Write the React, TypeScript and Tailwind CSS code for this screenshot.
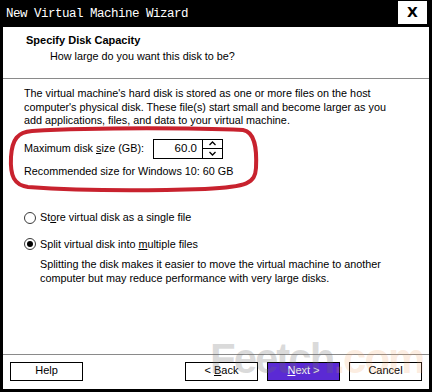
import React from 'react'

const ui = { fontFamily: '"Liberation Sans", Arial, sans-serif' }

function Radio({ checked }: { checked?: boolean }) {
  return (
    <span className="w-[12px] h-[12px] rounded-full border border-[#3a3a3a] bg-white flex items-center justify-center shrink-0">
      {checked && <span className="w-[6px] h-[6px] rounded-full bg-black" />}
    </span>
  )
}

function Btn({ children, className = '' }: { children: React.ReactNode; className?: string }) {
  return (
    <div className={`w-[73px] h-[19px] border border-black flex items-center justify-center text-[11px] ${className}`}>
      {children}
    </div>
  )
}

export default function App() {
  return (
    <div className="relative w-[432px] h-[392px] bg-black flex flex-col px-[3px] pb-[3px] overflow-hidden" style={ui}>
      {/* title bar */}
      <div className="h-[27px] flex items-center justify-between shrink-0">
        <span className="text-white text-[12.5px] tracking-[-0.5px] pl-[3px] pt-[1px]" style={{ fontFamily: '"Liberation Mono", "Courier New", monospace' }}>
          New Virtual Machine Wizard
        </span>
        <div className="w-[29px] h-[23px] mb-[2px] bg-white flex items-center justify-center text-[14px] font-bold mr-[2px]" style={{ fontFamily: '"DejaVu Sans", sans-serif' }}>
          X
        </div>
      </div>

      <div className="flex-1 bg-white flex flex-col text-[10.8px] text-black leading-[13.5px]">
        {/* header */}
        <div className="h-[51px] pt-[6px] shrink-0">
          <div className="pl-[23px] font-bold text-[11px] leading-[14px]">Specify Disk Capacity</div>
          <div className="pl-[47px] mt-[2px] leading-[14px]">How large do you want this disk to be?</div>
        </div>
        <div className="h-[2px] border-t border-[#8a8a8a] border-b border-b-white shrink-0" />

        <div className="pl-[21px] pr-[10px] pt-[7px]">
          <p>
            The virtual machine's hard disk is stored as one or more files on the host
            <br />
            computer's physical disk. These file(s) start small and become larger as you
            <br />
            add applications, files, and data to your virtual machine.
          </p>

          <div className="flex items-center mt-[11px] h-[20px]">
            <span className="w-[129px]">
              Maximum disk <span className="underline">s</span>ize (GB):
            </span>
            <div className="w-[50px] h-[20px] border border-black flex items-center justify-end pr-[5px] text-[11.5px]">60.0</div>
            <div className="w-[20px] h-[20px] flex flex-col">
              <div className="flex-1 border border-black border-l-0 flex items-center justify-center">
                <svg width="7" height="5" viewBox="0 0 7 5"><path d="M0.5 4 L3.5 1 L6.5 4" fill="none" stroke="black" strokeWidth="1.3" /></svg>
              </div>
              <div className="flex-1 border border-black border-l-0 border-t-0 flex items-center justify-center">
                <svg width="7" height="5" viewBox="0 0 7 5"><path d="M0.5 1 L3.5 4 L6.5 1" fill="none" stroke="black" strokeWidth="1.3" /></svg>
              </div>
            </div>
          </div>
          <div className="mt-[6px]">Recommended size for Windows 10: 60 GB</div>

          <div className="flex items-center gap-[4px] mt-[33px]">
            <Radio />
            <span>
              St<span className="underline">o</span>re virtual disk as a single file
            </span>
          </div>
          <div className="flex items-center gap-[4px] mt-[13px]">
            <Radio checked />
            <span>
              Split virtual disk into <span className="underline">m</span>ultiple files
            </span>
          </div>
          <p className="pl-[16px] mt-[7px]">
            Splitting the disk makes it easier to move the virtual machine to another
            <br />
            computer but may reduce performance with very large disks.
          </p>
        </div>

        <div className="flex-1" />
        <div className="h-[2px] border-t border-[#8a8a8a] border-b border-b-white shrink-0" />
        <div className="h-[33px] flex items-center px-[7px] pb-[3px] shrink-0">
          <Btn>Help</Btn>
          <div className="flex-1" />
          <Btn>
            &lt; <span className="underline ml-[3px]">B</span>ack
          </Btn>
          <Btn className="ml-[9px] bg-[#5b2ad4] text-white">
            <span className="underline">N</span>ext &gt;
          </Btn>
          <Btn className="ml-[9px]">Cancel</Btn>
        </div>
      </div>

      {/* red hand-drawn highlight */}
      <svg className="absolute left-0 top-0 pointer-events-none" width="432" height="392">
        <path
          d="M32 131 C 100 127, 200 128, 243 130 C 255 132, 257 148, 256 168 C 255 183, 248 187, 205 189 C 140 191, 70 190, 28 187 C 14 185, 10 176, 11 157 C 12 139, 18 132, 32 131 Z"
          fill="none"
          stroke="#c8222e"
          strokeWidth="4"
        />
      </svg>

      {/* watermark */}
      <div className="absolute left-[210px] top-[338px] pointer-events-none text-[42px] font-bold leading-none tracking-[-2px] select-none">
        <span className="text-[#6b6b6b]/25">Feetch</span>
        <span className="text-[#f0a060]/20">.com</span>
      </div>
    </div>
  )
}
